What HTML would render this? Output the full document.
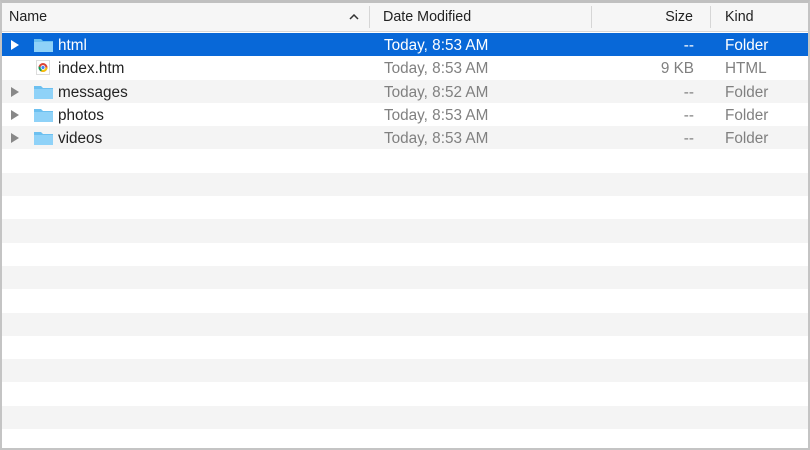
<!DOCTYPE html>
<html style="overflow:hidden;width:810px;height:450px"><head><style>
*{margin:0;padding:0;box-sizing:border-box}
body{width:810px;height:450px;overflow:hidden;background:#fff;font-family:"Liberation Sans",sans-serif;font-size:15.3px;position:relative}
.frame{position:absolute;left:0;top:0;width:810px;height:450px;border:2px solid #c4c4c4;border-top:3px solid #c0c0c0;border-bottom:2px solid #c4c4c4;z-index:5}
.hdr{position:absolute;left:2px;top:3px;width:806px;height:29px;background:#f6f6f6;border-bottom:1px solid #d8d8d8;color:#222;font-size:14.3px}
.hdr span{position:absolute;top:6px}
.div{position:absolute;top:3px;width:1px;height:22px;background:#d6d6d6}
.rows{position:absolute;left:2px;top:33px;width:806px;height:415px;overflow:hidden}
.row{height:23.3px;position:relative;color:#222}
.row.g{background:#f4f4f4}
.row.sel{background:#0868d8;color:#fff}
.row span{position:absolute;top:4px;white-space:nowrap}
.r{right:114px;text-align:right}
.dim{color:#808080}
.sel .dim{color:#fff}
.tri{position:absolute;left:9px;top:7px;width:0;height:0;border-left:8px solid #888;border-top:5px solid transparent;border-bottom:5px solid transparent}
.sel .tri{border-left-color:#fff}
.fold{position:absolute;left:32px;top:4px;width:19px;height:15px}
</style></head><body>
<div class="frame"></div>
<div class="hdr">
<span style="left:7px">Name</span>
<svg style="position:absolute;left:347px;top:11px" width="10" height="6" viewBox="0 0 10 6"><path d="M1 5L5 1L9 5" fill="none" stroke="#333" stroke-width="1.5"/></svg>
<div class="div" style="left:367px"></div>
<span style="left:381px">Date Modified</span>
<div class="div" style="left:589px"></div>
<span style="right:115px">Size</span>
<div class="div" style="left:708px"></div>
<span style="left:723px">Kind</span>
</div>
<div class="rows">
<div class="row sel"><div class="tri"></div><svg class="fold" viewBox="0 0 19 15"><path d="M0 2h7l2 2h10v11H0z" fill="#6cc0f0"/><rect x="0" y="5" width="19" height="10" fill="#8fd2f8"/></svg><span style="left:56px">html</span><span class="dim" style="left:382px">Today, 8:53 AM</span><span class="dim r">--</span><span class="dim" style="left:723px">Folder</span></div>
<div class="row"><svg style="position:absolute;left:34px;top:4px" width="14" height="15" viewBox="0 0 14 15"><rect x="0.5" y="0.5" width="13" height="14" fill="#fff" stroke="#ddd"/><circle cx="7" cy="7.5" r="4.5" fill="#db4437"/><path d="M7 7.5L11.5 7.5A4.5 4.5 0 0 1 5 11.5z" fill="#f4c20d"/><path d="M7 7.5L5 11.5A4.5 4.5 0 0 1 2.6 6.5z" fill="#0f9d58"/><circle cx="7" cy="7.5" r="2" fill="#4285f4" stroke="#fff" stroke-width=".8"/></svg><span style="left:56px">index.htm</span><span class="dim" style="left:382px">Today, 8:53 AM</span><span class="dim r">9 KB</span><span class="dim" style="left:723px">HTML</span></div>
<div class="row g"><div class="tri"></div><svg class="fold" viewBox="0 0 19 15"><path d="M0 2h7l2 2h10v11H0z" fill="#6cc0f0"/><rect x="0" y="5" width="19" height="10" fill="#8fd2f8"/></svg><span style="left:56px">messages</span><span class="dim" style="left:382px">Today, 8:52 AM</span><span class="dim r">--</span><span class="dim" style="left:723px">Folder</span></div>
<div class="row"><div class="tri"></div><svg class="fold" viewBox="0 0 19 15"><path d="M0 2h7l2 2h10v11H0z" fill="#6cc0f0"/><rect x="0" y="5" width="19" height="10" fill="#8fd2f8"/></svg><span style="left:56px">photos</span><span class="dim" style="left:382px">Today, 8:53 AM</span><span class="dim r">--</span><span class="dim" style="left:723px">Folder</span></div>
<div class="row g"><div class="tri"></div><svg class="fold" viewBox="0 0 19 15"><path d="M0 2h7l2 2h10v11H0z" fill="#6cc0f0"/><rect x="0" y="5" width="19" height="10" fill="#8fd2f8"/></svg><span style="left:56px">videos</span><span class="dim" style="left:382px">Today, 8:53 AM</span><span class="dim r">--</span><span class="dim" style="left:723px">Folder</span></div>
<div class="row"></div><div class="row g"></div><div class="row"></div><div class="row g"></div><div class="row"></div><div class="row g"></div><div class="row"></div><div class="row g"></div><div class="row"></div><div class="row g"></div><div class="row"></div><div class="row g"></div>
</div>
</body></html>
